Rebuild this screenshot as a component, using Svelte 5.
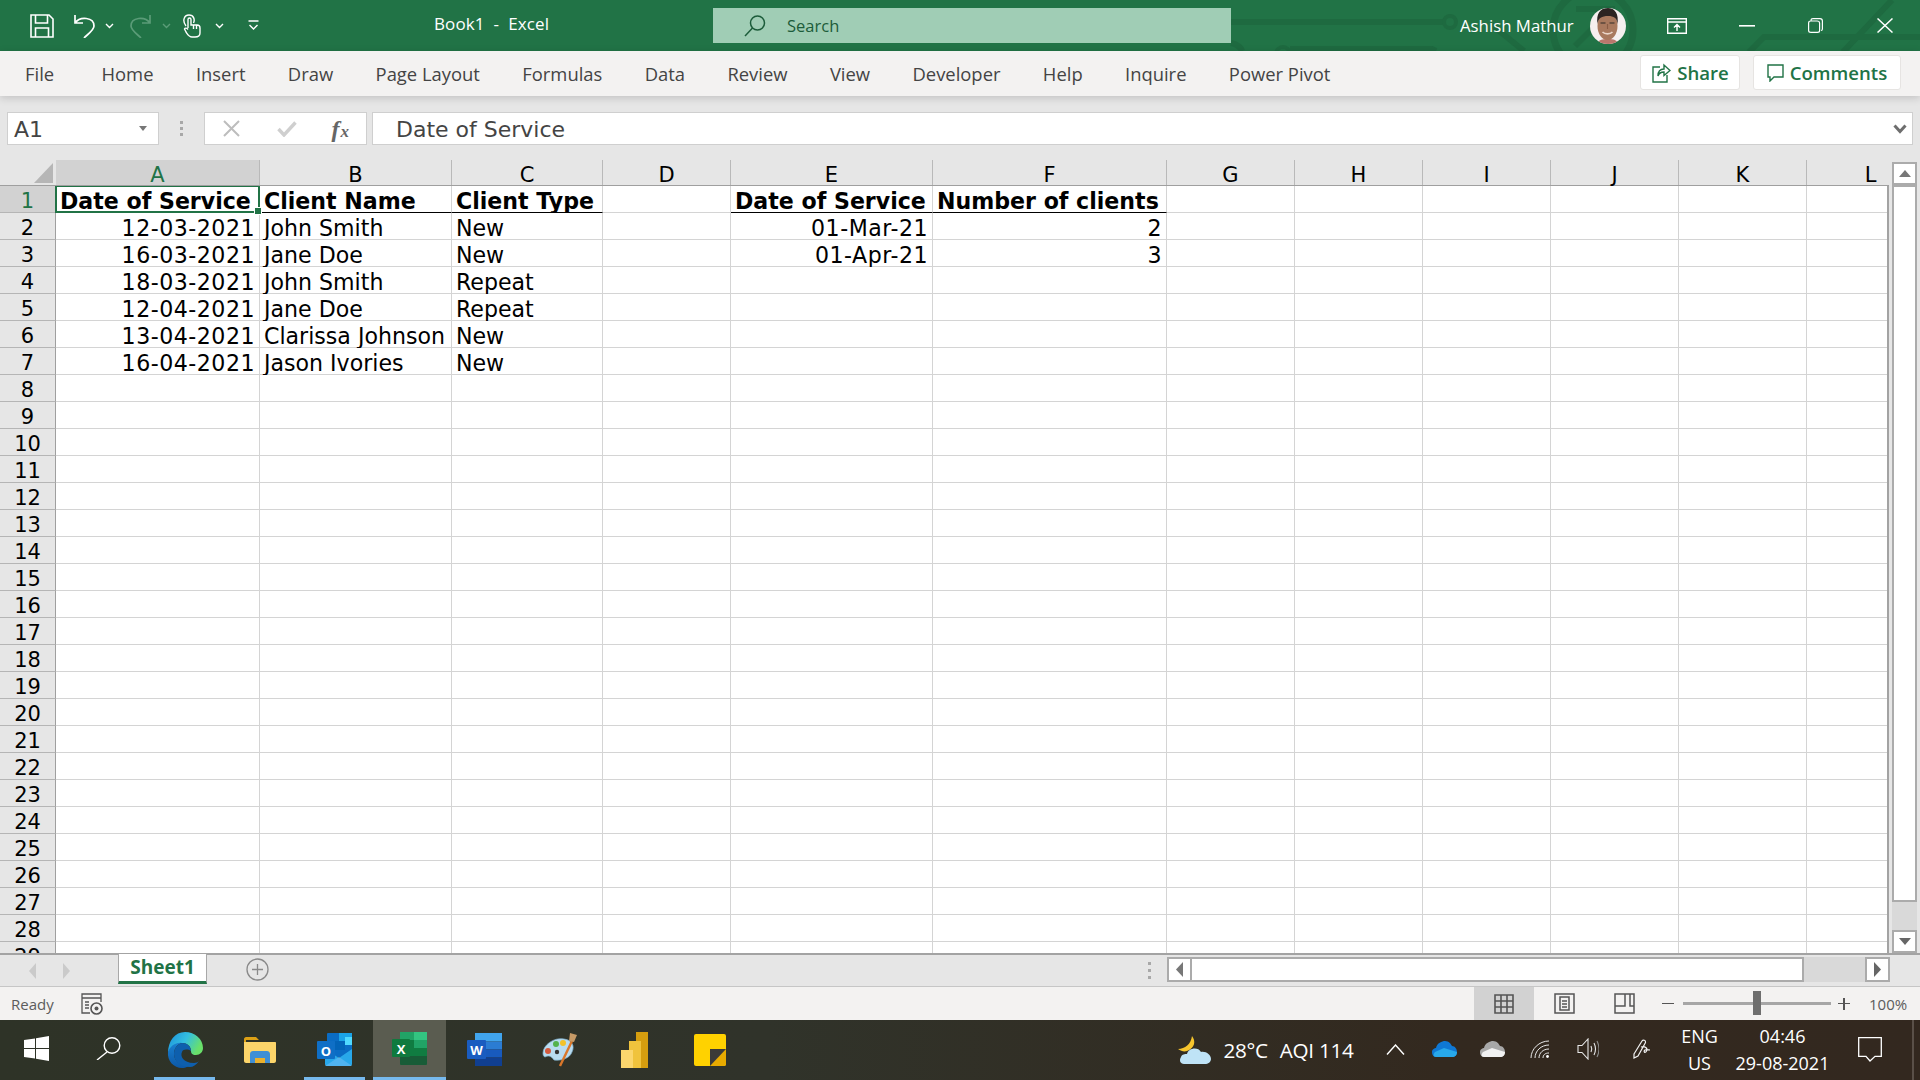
<script>
  const tabs = ["File", "Home", "Insert", "Draw", "Page Layout", "Formulas", "Data", "Review", "View", "Developer", "Help", "Inquire", "Power Pivot"];
  const columns = ["A", "B", "C", "D", "E", "F", "G", "H", "I", "J", "K", "L"];

  // sheet contents, keyed by row then column letter
  const data = {
    1: { A: "Date of Service", B: "Client Name", C: "Client Type", E: "Date of Service", F: "Number of clients" },
    2: { A: "12-03-2021", B: "John Smith", C: "New", E: "01-Mar-21", F: "2" },
    3: { A: "16-03-2021", B: "Jane Doe", C: "New", E: "01-Apr-21", F: "3" },
    4: { A: "18-03-2021", B: "John Smith", C: "Repeat" },
    5: { A: "12-04-2021", B: "Jane Doe", C: "Repeat" },
    6: { A: "13-04-2021", B: "Clarissa Johnson", C: "New" },
    7: { A: "16-04-2021", B: "Jason Ivories", C: "New" }
  };
  const rightAligned = ["A", "E", "F"];
  const rows = Array.from({ length: 29 }, (_, i) => i + 1);
  const headerCols = ["A", "B", "C", "E", "F"];
</script>

<div class="app">
  <header class="titlebar">
    <svg class="circuit" width="1920" height="51" viewBox="0 0 1920 51" fill="none" stroke="#1e6a40" stroke-width="6">
      <path d="M1231 22H1443" />
      <circle cx="1450" cy="22" r="6" stroke-width="4" />
      <circle cx="1283" cy="54" r="7" stroke-width="4" />
      <path d="M1290 49H1432L1436 51" />
      <path d="M1231 43Q1240 45 1242 51" />
      <path d="M1492 25L1524 51" />
      <circle cx="1593" cy="30" r="40" stroke-width="7" />
      <path d="M1576 9H1612V28M1610 11L1575 46" />
      <path d="M1749 52L1764 37H1920M1843 52L1892 0" />
    </svg>

    <div class="title-left">
      <div class="qat">
        <svg class="save" width="24" height="24" viewBox="0 0 24 24" fill="none" stroke="#fff" stroke-width="1.6">
          <path d="M1 1H19L23 5V23H1ZM5.5 1V9H17.5V1M5.5 23V14H18.5V23" />
        </svg>
        <svg class="undo" width="23" height="24" viewBox="0 0 23 24" fill="none" stroke="#fff" stroke-width="1.7">
          <path d="M2 1V9H10M2 9C7 2 21 3 21 12C21 16 15 20 11 24" />
        </svg>
        <svg class="chev c1" width="9" height="6" viewBox="0 0 9 6" fill="none" stroke="#fff" stroke-width="1.4"><path d="M1 1L4.5 4.5L8 1" /></svg>
        <svg class="redo" width="23" height="24" viewBox="0 0 23 24" fill="none" stroke="#5b9c78" stroke-width="1.7">
          <path d="M21 1V9H13M21 9C16 2 2 3 2 12C2 16 8 20 12 24" />
        </svg>
        <svg class="chev c2" width="9" height="6" viewBox="0 0 9 6" fill="none" stroke="#5b9c78" stroke-width="1.4"><path d="M1 1L4.5 4.5L8 1" /></svg>
        <svg class="touch" width="18" height="24" viewBox="0 0 18 24" fill="none" stroke="#fff" stroke-width="1.4">
          <path d="M3 12C-1 7 1 1 6 1C11 1 12 6 10.5 9M5 14V5.5C5 3.5 8 3.5 8 5.5V11H14C16 11 17 12 17 14V19C17 22 15 23 12 23H9C6 23 5 21 3 18L1.5 15C2 13.5 4 14 5 15.5M10.5 11V15M13.5 11V15" />
        </svg>
        <svg class="chev c3" width="9" height="6" viewBox="0 0 9 6" fill="none" stroke="#fff" stroke-width="1.4"><path d="M1 1L4.5 4.5L8 1" /></svg>
        <svg class="custom" width="11" height="11" viewBox="0 0 11 11" fill="none" stroke="#fff" stroke-width="1.4"><path d="M0.5 1H10.5M1.5 5L5.5 9L9.5 5" /></svg>
      </div>
      <span class="doc-title">Book1&nbsp; -&nbsp; Excel</span>
    </div>

    <div class="search">
      <svg width="24" height="24" viewBox="0 0 24 24" fill="none" stroke="#1c5c3a" stroke-width="1.5">
        <circle cx="14.5" cy="9" r="7" /><path d="M9.5 14L2 22" />
      </svg>
      <span>Search</span>
    </div>

    <div class="title-right">
      <span class="user">Ashish Mathur</span>
      <svg class="avatar" width="36" height="36" viewBox="0 0 36 36">
        <defs><clipPath id="round"><circle cx="18" cy="18" r="18" /></clipPath></defs>
        <g clip-path="url(#round)">
          <rect width="36" height="36" fill="#f5efef" />
          <path d="M7 36C8 32 12 31 18 31C24 31 27 32 28 36Z" fill="#b9776c" />
          <ellipse cx="17.5" cy="18" rx="10" ry="14" fill="#a9795e" />
          <path d="M7.5 16C6 6 10 0 18 0C25 0 29 6 27.5 16C27 10 24 8 18 8C12 8 8 10 7.5 16Z" fill="#2c2422" />
          <path d="M10.5 15H15.5M19.5 15H24.5" stroke="#5a463a" stroke-width="1.5" />
          <path d="M12.5 24C15 26.5 20 26.5 22.5 24" stroke="#ead5c8" stroke-width="1.6" fill="none" />
          <path d="M17.5 16V21" stroke="#8a5c44" stroke-width="1.1" />
        </g>
      </svg>
      <svg class="display" width="20" height="16" viewBox="0 0 20 16" fill="none" stroke="#fff" stroke-width="1.4">
        <path d="M0.7 0.7H19.3V15.3H0.7ZM0.7 4H19.3M10 13V7M7 9.5L10 6.5L13 9.5" />
      </svg>
      <svg class="min" width="16" height="2" viewBox="0 0 16 2"><rect width="16" height="1.6" fill="#fff" /></svg>
      <svg class="restore" width="15" height="15" viewBox="0 0 15 15" fill="none" stroke="#fff" stroke-width="1.2">
        <path d="M3 3V2C3 1 4 0.6 5 0.6H12C13.5 0.6 14.4 1.5 14.4 3V11C14.4 12 14 12.5 13 12.5M0.6 5C0.6 3.5 1.5 3 3 3H9C10.5 3 11.6 3.5 11.6 5V12.5C11.6 13.5 11 14.4 9.5 14.4H3C1.5 14.4 0.6 13.5 0.6 12.5Z" />
      </svg>
      <svg class="close" width="16" height="15" viewBox="0 0 16 15" fill="none" stroke="#fff" stroke-width="1.5"><path d="M0.5 0.5L15.5 14.5M15.5 0.5L0.5 14.5" /></svg>
    </div>
  </header>

  <nav class="ribbon">
    <ul class="tabs">
      {#each tabs as tab}
        <li>{tab}</li>
      {/each}
    </ul>
    <button class="ribbon-btn share">
      <svg width="20" height="20" viewBox="0 0 20 20" fill="none" stroke="#217346" stroke-width="1.4">
        <path d="M9 4H2V19H16V12M7 13C7 8 10 6 13 6V2L19 7.5L13 12.5V9C10 9 8 10 7 13Z" />
      </svg>
      Share
    </button>
    <button class="ribbon-btn comments">
      <svg width="17" height="18" viewBox="0 0 17 18" fill="none" stroke="#217346" stroke-width="1.4">
        <path d="M1 1H16V13H7L3 17V13H1Z" />
      </svg>
      Comments
    </button>
  </nav>

  <section class="formula-bar">
    <div class="name-box">
      <span>A1</span>
      <svg width="8" height="5" viewBox="0 0 8 5"><path d="M0 0H8L4 5Z" fill="#777" /></svg>
    </div>
    <div class="dots"><i></i><i></i><i></i></div>
    <div class="fx-group">
      <svg width="17" height="17" viewBox="0 0 17 17" fill="none" stroke="#bdbdbd" stroke-width="2"><path d="M1 1L16 16M16 1L1 16" /></svg>
      <svg class="check" width="20" height="16" viewBox="0 0 20 16" fill="none" stroke="#cfcfcf" stroke-width="3.4"><path d="M1.5 8L7 14L18.5 1.5" /></svg>
      <span class="fx">f<span class="fx-x">x</span></span>
    </div>
    <div class="formula-input">
      <span>Date of Service</span>
      <svg width="14" height="10" viewBox="0 0 14 10" fill="none" stroke="#6e6e6e" stroke-width="3"><path d="M1.5 1.5L7 7.5L12.5 1.5" /></svg>
    </div>
  </section>

  <section class="sheet">
    <div class="grid-area">
      <div class="col-heads">
        <div class="corner">
          <svg width="19" height="20" viewBox="0 0 19 20"><path d="M19 0V20H0Z" fill="#b6b6b6" /></svg>
        </div>
        {#each columns as col}
          <div class="col-head" class:active={col === "A"}>{col}</div>
        {/each}
      </div>
      <div class="rows">
        {#each rows as r}
          <div class="row">
            <div class="row-head" class:active={r === 1}>{r}</div>
            {#each columns as col}
              <div
                class="cell"
                class:bold={r === 1}
                class:right={r > 1 && rightAligned.includes(col)}
                class:underline={r === 1 && headerCols.includes(col)}
                class:sel={r === 1 && col === "A"}
              >{data[r]?.[col] ?? ""}</div>
            {/each}
          </div>
        {/each}
      </div>
    </div>
    <div class="vscroll">
      <div class="sb-btn">
        <svg width="12" height="7" viewBox="0 0 12 7"><path d="M6 0L12 7H0Z" fill="#777" /></svg>
      </div>
      <div class="v-thumb"></div>
      <div class="v-track"></div>
      <div class="sb-btn">
        <svg width="12" height="7" viewBox="0 0 12 7"><path d="M0 0H12L6 7Z" fill="#666" /></svg>
      </div>
    </div>
  </section>

  <section class="tabbar">
    <div class="sheet-nav">
      <svg width="7" height="16" viewBox="0 0 7 16"><path d="M7 0V16L0 8Z" fill="#cacaca" /></svg>
      <svg width="7" height="16" viewBox="0 0 7 16"><path d="M0 0V16L7 8Z" fill="#cacaca" /></svg>
    </div>
    <div class="sheet-tab">Sheet1</div>
    <svg class="add-sheet" width="23" height="23" viewBox="0 0 23 23" fill="none" stroke="#8a8a8a" stroke-width="1.3">
      <circle cx="11.5" cy="11.5" r="10.5" /><path d="M11.5 6V17M6 11.5H17" />
    </svg>
    <div class="tab-dots"><i></i><i></i><i></i></div>
    <div class="hscroll">
      <div class="h-btn">
        <svg width="7" height="15" viewBox="0 0 7 15"><path d="M7 0V15L0 7.5Z" fill="#777" /></svg>
      </div>
      <div class="h-thumb"></div>
      <div class="h-track"></div>
      <div class="h-btn end">
        <svg width="7" height="15" viewBox="0 0 7 15"><path d="M0 0V15L7 7.5Z" fill="#666" /></svg>
      </div>
    </div>
  </section>

  <footer class="status">
    <span class="ready">Ready</span>
    <svg class="macro" width="22" height="22" viewBox="0 0 22 22" fill="none" stroke="#555" stroke-width="1.3">
      <path d="M9 20H1V1H20V9M1 5H20M4 9H8M4 12H8M4 15H8" />
      <circle cx="15.5" cy="15.5" r="5.5" stroke-width="1.6" /><circle cx="15.5" cy="15.5" r="2" fill="#555" stroke="none" />
    </svg>
    <div class="views">
      <div class="view active">
        <svg width="20" height="20" viewBox="0 0 20 20" fill="none" stroke="#555" stroke-width="1.6">
          <path d="M1 1H19V19H1ZM1 7H19M1 13H19M7 1V19M13 1V19" />
        </svg>
      </div>
      <div class="view">
        <svg width="21" height="21" viewBox="0 0 21 21" fill="none" stroke="#555" stroke-width="1.5">
          <path d="M1 1H20V20H1ZM6 4H15V17H6ZM8 8H13M8 11H13M8 14H13" />
        </svg>
      </div>
      <div class="view">
        <svg width="21" height="21" viewBox="0 0 21 21" fill="none" stroke="#555" stroke-width="1.5">
          <path d="M1 1H20V20H1ZM1 13H11V1M16 1V13H20" />
        </svg>
      </div>
    </div>
    <div class="zoom">
      <span class="zoom-sign minus"></span>
      <div class="slider"><div class="knob"></div></div>
      <span class="zoom-sign plus"></span>
      <span class="pct">100%</span>
    </div>
  </footer>

  <footer class="taskbar">
    <div class="start">
      <svg width="25" height="25" viewBox="0 0 25 25" fill="#fff">
        <path d="M0 4L11 2.4V12H0ZM12 2.3L25 0V12H12ZM0 13H11V22.6L0 21ZM12 13H25V25L12 22.8Z" />
      </svg>
    </div>
    <div class="start">
      <svg width="25" height="23" viewBox="0 0 25 23" fill="none" stroke="#fff" stroke-width="1.4">
        <circle cx="16" cy="8.5" r="7.8" /><path d="M11 15L1 23" />
      </svg>
    </div>
    <div class="apps">
      <div class="app-btn open">
        <svg width="36" height="36" viewBox="0 0 36 36">
          <defs>
            <linearGradient id="edge1" x1="0" y1="0" x2="1" y2="0.4"><stop offset="0" stop-color="#1a8fdc" /><stop offset=".55" stop-color="#34bfe0" /><stop offset="1" stop-color="#69e06a" /></linearGradient>
            <linearGradient id="edge2" x1="0" y1="0" x2="0" y2="1"><stop offset="0" stop-color="#1a7fd0" /><stop offset="1" stop-color="#0c58a6" /></linearGradient>
          </defs>
          <path d="M18 0C28 0 36 7 36 16C36 20 33 23 29 23C25 23 24 21 24 19C24 14 20 11 15 11C9 11 4 15 1 21C1 9 8 0 18 0Z" fill="url(#edge1)" />
          <path d="M1 20C3 14 9 10 15 11C10 12 7 17 7 22C7 29 14 35 23 33C20 35.5 17 36 15 36C7 36 0 29 1 20Z" fill="url(#edge2)" />
          <path d="M15 11C20 11 24 14 24 19C21 17 16 17 15 20C13 24 16 31 27 31C29 31 31 30 32 29C29 33 26 35 23 35C13 35 7 29 7 22C7 17 10 12 15 11Z" fill="#0e5fad" />
        </svg>
      </div>
      <div class="app-btn">
        <svg width="32" height="26" viewBox="0 0 32 26">
          <path d="M0 2C0 1 1 0 2 0H12L15 3H2V8H0Z" fill="#dca116" />
          <path d="M0 5H31C31.6 5 32 5.4 32 6V24C32 25 31 26 30 26H2C1 26 0 25 0 24Z" fill="#fcd56a" />
          <path d="M6 26V17C6 15 7.5 14 9 14H23C24.5 14 26 15 26 17V26H21V21H11V26Z" fill="#3f8fd6" />
          <rect x="11" y="21" width="10" height="5" fill="#eab12e" />
        </svg>
      </div>
      <div class="app-btn open">
        <svg width="36" height="33" viewBox="0 0 36 33">
          <rect x="10" y="0" width="25" height="24" rx="1" fill="#0a6cc4" />
          <rect x="22" y="0" width="13" height="8" fill="#1aa3e8" />
          <rect x="28" y="4" width="7" height="8" fill="#50d9ff" />
          <rect x="18" y="8" width="10" height="9" fill="#0364b8" />
          <path d="M8 16L22 25L35 16V31C35 32 34 33 33 33H10C9 33 8 32 8 31Z" fill="#28a8ea" />
          <path d="M8 33L22 24L35 33Z" fill="#50b4f0" />
          <rect x="0" y="8" width="18" height="18" rx="1" fill="#0f6fc6" />
          <text x="9" y="22.5" text-anchor="middle" class="badge">O</text>
        </svg>
      </div>
      <div class="app-btn current">
        <svg width="36" height="33" viewBox="0 0 36 33">
          <rect x="8" y="0" width="27" height="33" rx="1" fill="#185c37" />
          <rect x="8" y="0" width="14" height="8" fill="#21a366" />
          <rect x="22" y="0" width="13" height="8" fill="#33c481" />
          <rect x="8" y="8" width="14" height="16" fill="#107c41" />
          <rect x="22" y="8" width="13" height="8" fill="#21a366" />
          <rect x="22" y="16" width="13" height="8" fill="#107c41" />
          <rect x="0" y="7" width="18" height="18" rx="1" fill="#0f7a3e" />
          <text x="9" y="21.5" text-anchor="middle" class="badge">X</text>
        </svg>
      </div>
      <div class="app-btn">
        <svg width="36" height="33" viewBox="0 0 36 33">
          <rect x="8" y="0" width="27" height="8.5" fill="#41a5ee" />
          <rect x="8" y="8.5" width="27" height="8" fill="#2b7cd3" />
          <rect x="8" y="16.5" width="27" height="8" fill="#185abd" />
          <rect x="8" y="24.5" width="27" height="8.5" fill="#103f91" />
          <rect x="0" y="7" width="19" height="19" rx="1" fill="#1a5cc0" />
          <text x="9.5" y="22" text-anchor="middle" class="badge">W</text>
        </svg>
      </div>
      <div class="app-btn">
        <svg width="36" height="35" viewBox="0 0 36 35">
          <path d="M1 21C1 13 12 5 22 7C30 8 33 14 30 20C28 26 20 29 12 28C9 24 7 23 3 25C1.5 24.5 1 23 1 21Z" fill="#b9dcf0" stroke="#7fb1cf" stroke-width=".7" />
          <circle cx="14" cy="12" r="3" fill="#54b34d" />
          <circle cx="21" cy="11" r="3" fill="#f3c229" />
          <circle cx="6" cy="19" r="3" fill="#d55a3d" />
          <circle cx="15" cy="20" r="2.2" fill="#333" />
          <path d="M18 34L30 9" stroke="#d9772a" stroke-width="2.4" />
          <path d="M27 9L28 1L35 3L32 10Z" fill="#c69a66" />
        </svg>
      </div>
      <div class="app-btn">
        <svg width="27" height="36" viewBox="0 0 27 36">
          <rect x="15" y="0" width="12" height="36" fill="#d69e0f" />
          <rect x="8" y="9" width="12" height="27" fill="#f0c33d" />
          <rect x="0" y="18" width="12" height="18" fill="#fbd66d" />
        </svg>
      </div>
      <div class="app-btn">
        <svg width="32" height="32" viewBox="0 0 32 32">
          <rect width="32" height="32" rx="2" fill="#ffd200" />
          <path d="M16 15H32V30C32 31 31 32 30 32H16Z" fill="#e8ab00" />
          <path d="M16 15H32L16 32Z" fill="#3b3a38" />
        </svg>
      </div>
    </div>

    <div class="tray">
      <div class="weather">
        <svg width="33" height="28" viewBox="0 0 33 28">
          <path d="M14 0C18 5 17 12 9 15C6 16 3 15 0 13C7 13 13 8 14 0Z" fill="#f6c52d" />
          <path d="M6 28C2 28 1 24 3 21C4 18 7 18 9 18C10 12 20 10 23 16C28 15 33 19 33 23C33 26 30 28 27 28Z" fill="#bfe3f6" />
        </svg>
        <span>28°C</span>
        <span class="aqi">AQI 114</span>
      </div>
      <div class="tray-icon chevron">
        <svg width="19" height="11" viewBox="0 0 19 11" fill="none" stroke="#fff" stroke-width="1.4"><path d="M1 10.5L9.5 1L18 10.5" /></svg>
      </div>
      <div class="tray-icon">
        <svg width="25" height="16" viewBox="0 0 25 16">
          <path d="M4 16C1 16 0 13 0 11C0 8 3 7 4 7C5 2 10 0 13 0C17 0 19 3 20 5C23 5 25 8 25 11C25 14 23 16 20 16Z" fill="#0f78d4" />
          <path d="M4 16C1 16 1 13 3 11L12 7L25 11C25 14 23 16 20 16Z" fill="#28a8ea" />
        </svg>
      </div>
      <div class="tray-icon">
        <svg width="25" height="16" viewBox="0 0 25 16">
          <path d="M4 16C1 16 0 13 0 11C0 8 3 7 4 7C5 2 10 0 13 0C17 0 19 3 20 5C23 5 25 8 25 11C25 14 23 16 20 16Z" fill="#a8a8a8" />
          <path d="M4 16C1 16 1 13 3 11L12 7L25 11C25 14 23 16 20 16Z" fill="#f1f1f1" />
        </svg>
      </div>
      <div class="tray-icon">
        <svg width="20" height="18" viewBox="0 0 20 18" fill="none" stroke="#e8e8e8" stroke-width="1">
          <path d="M1 18C1 9 9 1 19 1M5 18C5 11 11 5 19 5M9 18C9 13 13 9 19 9M13 18C13 15 15 13 19 13" />
          <circle cx="17.5" cy="16.5" r="1.4" fill="#fff" stroke="none" />
        </svg>
      </div>
      <div class="tray-icon">
        <svg width="22" height="22" viewBox="0 0 22 22" fill="none" stroke="#e8e8e8" stroke-width="1.1">
          <path d="M1 7.5H5L11 1V21L5 14.5H1Z" />
          <path d="M14 8C15 10 15 12 14 14M17 5C19 9 19 13 17 17" /><path d="M20 3C22.5 8 22.5 14 20 19" stroke="#8c8c8c" />
        </svg>
      </div>
      <div class="tray-icon pen">
        <svg width="20" height="20" viewBox="0 0 20 20" fill="none" stroke="#f2f2f2" stroke-width="1.2">
          <path d="M3 15L11 2C12 0.5 15 1 14.5 3.5L7 17L3 19ZM10 8C14 7 17 9 15.5 12C14 15 12 12 14 11C16 10 18 11 19 11" />
        </svg>
      </div>
      <div class="lang"><span>ENG</span><span>US</span></div>
      <div class="clock"><span>04:46</span><span>29-08-2021</span></div>
      <div class="tray-icon notify">
        <svg width="24" height="25" viewBox="0 0 24 25" fill="none" stroke="#fff" stroke-width="1.3">
          <path d="M0.7 0.7H23.3V19.3H17L12 24L8 19.3H0.7Z" />
        </svg>
      </div>
      <div class="show-desktop"></div>
    </div>
  </footer>
</div>

<style>
  :global(body) {
    margin: 0;
    background: #e6e6e6;
  }

  .app {
    width: 1920px;
    height: 1080px;
    display: flex;
    flex-direction: column;
    overflow: hidden;
    font-family: "Open Sans", "Noto Sans", sans-serif;
    color: #444;
  }

  /* title bar */
  .titlebar {
    position: relative;
    height: 51px;
    flex: none;
    background: #217346;
    display: flex;
    color: #fff;
    overflow: hidden;
  }
  .circuit {
    position: absolute;
    left: 0;
    top: 0;
  }
  .title-left {
    position: relative;
    width: 713px;
    display: flex;
    align-items: center;
  }
  .qat {
    display: flex;
    align-items: center;
    width: 434px;
    padding-left: 30px;
    box-sizing: border-box;
  }
  .undo { margin-left: 19px; }
  .c1 { margin-left: 9px; }
  .redo { margin-left: 15px; }
  .c2 { margin-left: 10px; }
  .touch { margin-left: 12px; }
  .c3 { margin-left: 14px; }
  .custom { margin-left: 24px; }
  .doc-title {
    font-size: 17px;
    letter-spacing: 0.1px;
    margin-top: -4px;
    white-space: nowrap;
  }
  .search {
    position: relative;
    width: 518px;
    height: 35px;
    margin-top: 8px;
    background: #a0cdb5;
    color: #1c5c3a;
    display: flex;
    align-items: center;
    font-size: 16.5px;
  }
  .search svg {
    margin-left: 30px;
    margin-right: 20px;
  }
  .title-right {
    position: relative;
    flex: 1;
    display: flex;
    align-items: center;
  }
  .user {
    margin-left: 229px;
    font-size: 16.8px;
    margin-top: -1px;
    white-space: nowrap;
    width: 130px;
  }
  .display { margin-left: 41px; }
  .min { margin-left: 52px; }
  .restore { margin-left: 53px; }
  .close { margin-left: 54px; }

  /* ribbon */
  .ribbon {
    position: relative;
    height: 45px;
    flex: none;
    background: #f3f2f1;
    display: flex;
    align-items: center;
    box-shadow: 0 2px 8px rgba(0, 0, 0, 0.16);
  }
  .tabs {
    list-style: none;
    margin: 0;
    padding: 0 0 0 25px;
    display: flex;
    gap: 42.4px;
    flex: 1;
    font-size: 18.4px;
    color: #444;
  }
  .tabs li:first-child {
    margin-right: 5px;
  }
  .ribbon-btn {
    height: 35px;
    margin-top: -2px;
    background: #fff;
    border: 1px solid #e6e4e2;
    border-radius: 3px;
    color: #217346;
    font: 600 18.6px "Open Sans", sans-serif;
    display: flex;
    align-items: center;
    justify-content: center;
    gap: 6px;
    padding: 0;
  }
  .share {
    width: 100px;
    margin-right: 13px;
  }
  .comments {
    width: 148px;
    margin-right: 19px;
  }

  /* formula bar */
  .formula-bar {
    height: 64px;
    flex: none;
    box-sizing: border-box;
    padding: 16px 7px 15px;
    display: flex;
    font-family: "DejaVu Sans", sans-serif;
    font-size: 22px;
    color: #444;
  }
  .name-box,
  .fx-group,
  .formula-input {
    background: #fff;
    border: 1px solid #cfcfcf;
    box-sizing: border-box;
    display: flex;
    align-items: center;
  }
  .name-box span,
  .formula-input span {
    padding-top: 2px;
  }
  .name-box {
    width: 152px;
    padding: 0 11px 0 6px;
    justify-content: space-between;
  }
  .dots {
    width: 45px;
    display: flex;
    flex-direction: column;
    align-items: center;
    justify-content: center;
    gap: 3px;
  }
  .dots i,
  .tab-dots i {
    width: 3px;
    height: 3px;
    background: #a8a8a8;
  }
  .fx-group {
    width: 163px;
    padding: 0 17px 0 18px;
    justify-content: space-between;
  }
  .check { margin-left: 2px; }
  .fx {
    font-family: "Liberation Serif", serif;
    font-style: italic;
    font-weight: 700;
    font-size: 24px;
    color: #666;
    line-height: 1;
  }
  .fx-x {
    font-size: 17px;
    margin-left: 1px;
  }
  .formula-input {
    margin-left: 5px;
    flex: 1;
    padding: 0 5px 0 23px;
    justify-content: space-between;
  }

  /* sheet */
  .sheet {
    height: 793px;
    flex: none;
    display: flex;
    font-family: "DejaVu Sans", sans-serif;
    font-size: 22.1px;
    color: #000;
  }
  .grid-area {
    width: 1889px;
    overflow: hidden;
    display: flex;
    flex-direction: column;
  }
  .col-heads,
  .row {
    display: grid;
    grid-template-columns: 56px 204px 192px 151px 128px 202px 234px 128px 128px 128px 128px 128px 128px;
    width: 1989px;
  }
  .col-heads {
    height: 26px;
    flex: none;
    box-sizing: border-box;
    border-bottom: 1px solid #9f9f9f;
  }
  .corner {
    display: flex;
    justify-content: flex-end;
    align-items: flex-start;
    padding: 3px 3px 0 0;
    box-sizing: border-box;
    height: 25px;
    overflow: hidden;
  }
  .col-head {
    text-align: center;
    font-size: 21px;
    line-height: 31px;
    height: 25px;
    border-right: 1px solid #b9b9b9;
    box-sizing: border-box;
  }
  .col-head.active {
    background: #d2d2d2;
    color: #217346;
  }
  .rows {
    flex: 1;
    overflow: hidden;
    border-right: 2px solid #a3a3a3;
  }
  .row {
    grid-template-rows: 27px;
    height: 27px;
    line-height: 27px;
  }
  .row-head {
    box-sizing: border-box;
    background: #e6e6e6;
    border-right: 1px solid #9f9f9f;
    border-bottom: 1px solid #b5b5b5;
    text-align: center;
    font-size: 21px;
    padding-top: 2px;
  }
  .row-head.active {
    background: #d2d2d2;
    color: #217346;
  }
  .cell {
    position: relative;
    box-sizing: border-box;
    background: #fff;
    border-right: 1px solid #d4d4d4;
    border-bottom: 1px solid #d4d4d4;
    padding: 2px 4px 0 4px;
    white-space: nowrap;
    overflow: visible;
  }
  .bold {
    font-weight: 700;
    font-size: 22.1px;
  }
  .right {
    text-align: right;
    letter-spacing: 0.5px;
  }
  .underline { border-bottom-color: #000; }
  .sel::after {
    content: "";
    position: absolute;
    left: -1px;
    top: -1px;
    right: -1px;
    bottom: -1px;
    border: 2px solid #217346;
  }
  .sel::before {
    content: "";
    position: absolute;
    right: -3px;
    bottom: -3px;
    width: 6px;
    height: 6px;
    background: #217346;
    border: 1px solid #fff;
    z-index: 1;
  }

  /* scroll bars */
  .vscroll {
    width: 25px;
    margin: 2px 0 0 3px;
    display: flex;
    flex-direction: column;
    background: #d9d9d9;
  }
  .sb-btn {
    height: 23px;
    flex: none;
    background: #fff;
    border: 2px solid #ababab;
    box-sizing: border-box;
    display: flex;
    align-items: center;
    justify-content: center;
  }
  .v-thumb {
    height: 717px;
    flex: none;
    background: #fff;
    border: 2px solid #ababab;
    box-sizing: border-box;
  }
  .v-track { flex: 1; }

  .tabbar {
    height: 34px;
    flex: none;
    box-sizing: border-box;
    background: #e6e6e6;
    border-top: 2px solid #a3a3a3;
    border-bottom: 1px solid #c6c6c6;
    display: flex;
    align-items: flex-start;
  }
  .sheet-nav {
    width: 118px;
    box-sizing: border-box;
    padding: 8px 0 0 29px;
    display: flex;
    gap: 27px;
  }
  .sheet-tab {
    width: 89px;
    height: 30px;
    margin-top: -1px;
    box-sizing: border-box;
    background: #fff;
    border: 1px solid #a8a8a8;
    border-top: none;
    border-bottom: 3px solid #217346;
    color: #217346;
    font-size: 19px;
    font-weight: 700;
    text-align: center;
    line-height: 26px;
  }
  .add-sheet {
    margin: 3px 0 0 39px;
  }
  .tab-dots {
    margin: 0 0 0 879px;
    padding-top: 6px;
    height: 24px;
    box-sizing: border-box;
    display: flex;
    flex-direction: column;
    justify-content: center;
    gap: 4px;
    width: 20px;
  }
  .hscroll {
    width: 723px;
    height: 25px;
    margin-top: 2px;
    margin-left: -1px;
    display: flex;
    background: #d9d9d9;
  }
  .h-btn {
    width: 25px;
    flex: none;
    background: #fff;
    border: 2px solid #ababab;
    box-sizing: border-box;
    display: flex;
    align-items: center;
    justify-content: center;
  }
  .h-thumb {
    width: 612px;
    flex: none;
    background: #fff;
    border: 2px solid #ababab;
    border-left: none;
    box-sizing: border-box;
  }
  .h-track { flex: 1; }

  /* status bar */
  .status {
    height: 33px;
    flex: none;
    background: #f3f2f1;
    display: flex;
    align-items: center;
    font-size: 15px;
    color: #5c5c5c;
  }
  .ready {
    margin-left: 11px;
    width: 70px;
  }
  .views {
    margin-left: 1371px;
    display: flex;
    align-self: stretch;
  }
  .view {
    width: 60px;
    display: flex;
    align-items: center;
    justify-content: center;
  }
  .view.active { background: #d2d2d2; }
  .zoom {
    margin-left: 8px;
    display: flex;
    align-items: center;
  }
  .zoom-sign {
    position: relative;
    width: 12px;
    height: 12px;
  }
  .zoom-sign::before {
    content: "";
    position: absolute;
    left: 0;
    right: 0;
    top: 5px;
    height: 1.5px;
    background: #555;
  }
  .plus::after {
    content: "";
    position: absolute;
    top: 0;
    bottom: 0;
    left: 5px;
    width: 1.5px;
    background: #555;
  }
  .slider {
    position: relative;
    width: 148px;
    height: 3px;
    margin: 0 7px 0 9px;
    background: #a6a6a6;
  }
  .knob {
    position: absolute;
    left: 70px;
    top: -11px;
    width: 8px;
    height: 24px;
    background: #6e6e6e;
  }
  .pct {
    margin-left: 19px;
    font-size: 15px;
    white-space: nowrap;
  }

  /* taskbar */
  .taskbar {
    height: 60px;
    flex: none;
    background: linear-gradient(90deg, #2e3327 0%, #30332a 40%, #33291f 75%, #33281f 100%);
    display: flex;
    color: #fff;
  }
  .start {
    width: 72px;
    display: flex;
    align-items: center;
    justify-content: center;
    flex: none;
    padding-bottom: 4px;
    box-sizing: border-box;
  }
  .apps {
    display: flex;
    margin-left: 3px;
  }
  .app-btn {
    position: relative;
    width: 75px;
    display: flex;
    align-items: center;
    justify-content: center;
    padding-bottom: 1px;
    box-sizing: border-box;
  }
  .app-btn.open::after {
    content: "";
    position: absolute;
    left: 7px;
    right: 7px;
    bottom: 0;
    height: 3px;
    background: #76b9ed;
  }
  .app-btn.current {
    background: #5a5c50;
    width: 73px;
    margin: 0 1px;
    border-bottom: 3px solid #76b9ed;
  }
  .badge {
    font: 700 13px "Open Sans", sans-serif;
    fill: #fff;
  }
  .tray {
    margin-left: auto;
    display: flex;
    align-items: center;
    height: 100%;
  }
  .weather {
    display: flex;
    align-items: center;
    font-size: 20.7px;
    letter-spacing: -0.3px;
    width: 193.6px;
    white-space: nowrap;
  }
  .weather span { margin-left: 12px; }
  .weather .aqi { margin-left: 12px; }
  .tray-icon {
    width: 48px;
    display: flex;
    align-items: center;
    justify-content: center;
    padding-bottom: 2px;
    box-sizing: border-box;
  }
  .chevron { padding-right: 2px; }
  .pen { margin-left: 5px; }
  .lang,
  .clock {
    display: flex;
    flex-direction: column;
    align-items: center;
    justify-content: space-between;
    height: 50px;
    font-size: 18px;
    line-height: 23px;
  }
  .lang {
    width: 54px;
    margin-left: 7.5px;
  }
  .clock {
    width: 106px;
    margin-left: 3px;
  }
  .notify {
    margin-left: 10px;
  }
  .show-desktop {
    width: 2px;
    height: 100%;
    margin-left: 18.5px;
    margin-right: 6px;
    background: #5a5048;
  }
</style>
